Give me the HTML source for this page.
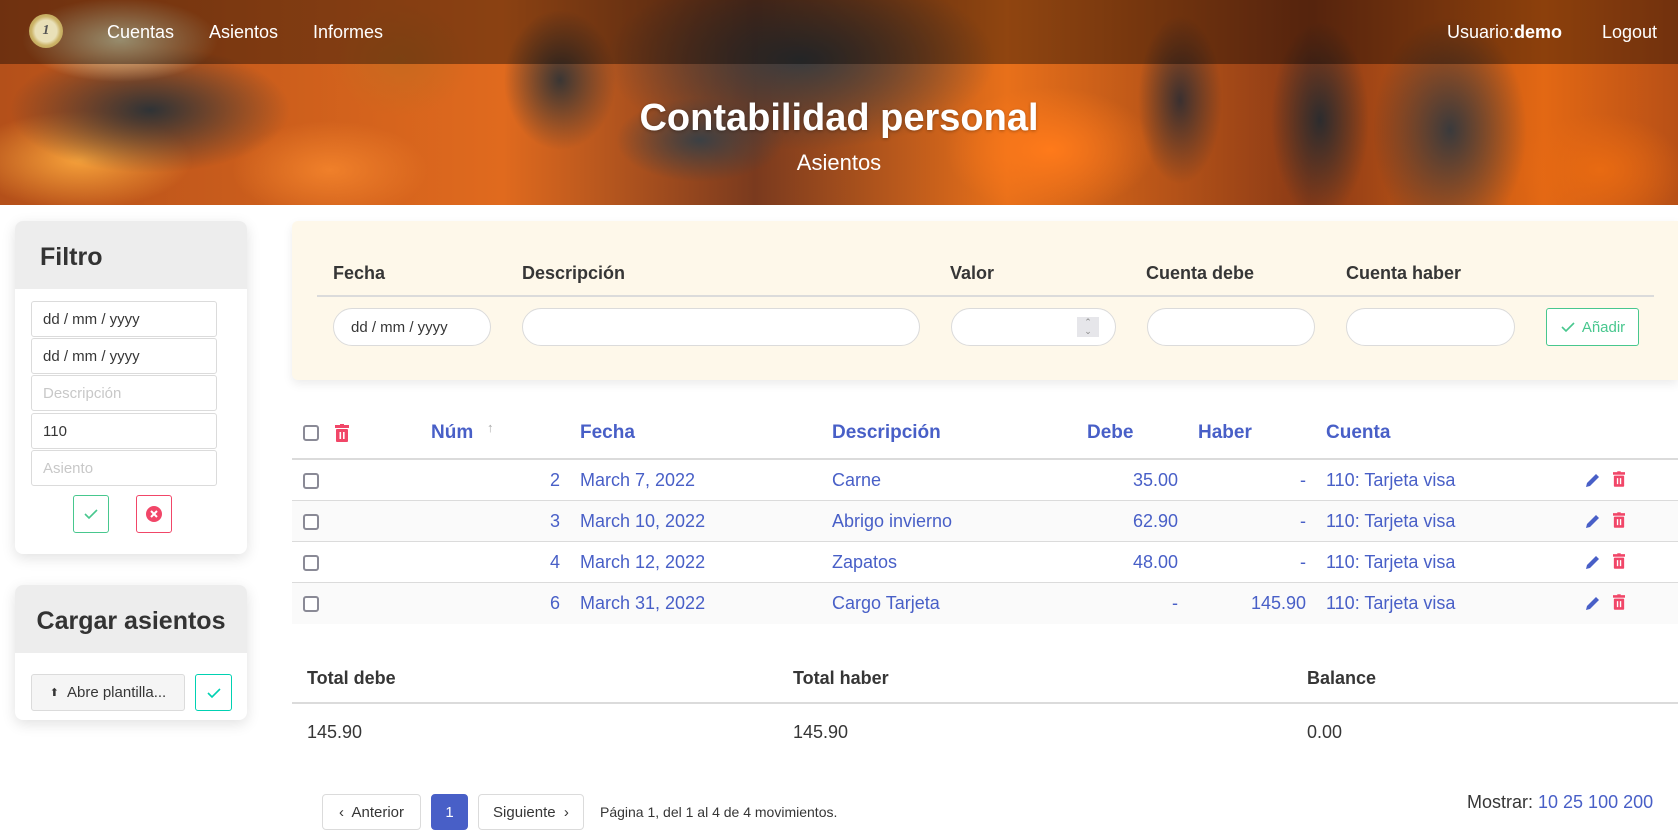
<!DOCTYPE html>
<html><head><meta charset="utf-8">
<style>
*{box-sizing:border-box;margin:0;padding:0}
body{width:1678px;height:835px;overflow:hidden;background:#fff;font-family:"Liberation Sans",sans-serif;color:#363636;position:relative}
.banner{position:absolute;left:0;top:0;width:1678px;height:205px;overflow:hidden;
background:
radial-gradient(ellipse 140px 60px at 120px 40px,#f3e2b0 0%,rgba(240,220,170,0) 70%),
radial-gradient(ellipse 200px 90px at 150px 110px,#2f3336 0%,rgba(40,44,48,0) 70%),
radial-gradient(ellipse 160px 70px at 80px 160px,#f6a13a 0%,rgba(246,150,50,0) 70%),
radial-gradient(ellipse 260px 120px at 800px 60px,#3a3c3e 0%,rgba(50,50,52,0) 75%),
radial-gradient(ellipse 120px 60px at 700px 140px,#3b4044 0%,rgba(50,55,60,0) 70%),
radial-gradient(ellipse 110px 160px at 1450px 130px,#3a3a3c 0%,rgba(50,50,52,0) 70%),
radial-gradient(ellipse 70px 140px at 1320px 120px,#2c2c2e 0%,rgba(40,40,40,0) 70%),
radial-gradient(ellipse 60px 120px at 1180px 100px,#3a3030 0%,rgba(40,40,40,0) 70%),
radial-gradient(ellipse 80px 100px at 560px 80px,#3a3634 0%,rgba(40,40,40,0) 70%),
radial-gradient(ellipse 150px 90px at 1050px 150px,#ff7a1a 0%,rgba(255,120,30,0) 70%),
radial-gradient(ellipse 120px 80px at 1600px 170px,#e86a12 0%,rgba(230,100,20,0) 70%),
radial-gradient(ellipse 100px 80px at 400px 60px,#c9691e 0%,rgba(200,100,30,0) 70%),
radial-gradient(ellipse 140px 70px at 330px 170px,#f0802a 0%,rgba(240,130,40,0) 70%),
linear-gradient(90deg,#b4501a,#e06a1e 30%,#7a3a1e 45%,#e8701a 60%,#8a3a16 78%,#e36814 92%,#b85016);}
.navbar{position:absolute;left:0;top:0;width:1678px;height:64px;background:rgba(0,0,0,.38)}
.nav a{position:absolute;top:22px;color:#fff;font-size:18px;text-decoration:none}
.logo{position:absolute;left:29px;top:14px;width:34px;height:34px;border-radius:50%;background:radial-gradient(circle,#e9e0b8 45%,#cdb56a 60%,#a98f40 100%);font:italic bold 14px "Liberation Serif",serif;color:#555;text-align:center;line-height:34px}
.title{position:absolute;left:0;width:1678px;text-align:center;color:#fff}
.card{position:absolute;background:#fff;border-radius:8px;box-shadow:0 4px 14px rgba(0,0,0,.12);overflow:hidden}
.card .hd{background:#ededed;font-weight:bold;font-size:25px;color:#333;white-space:nowrap}
.finp{position:absolute;left:16px;width:186px;height:36px;border:1px solid #dbdbdb;border-radius:3px;font-size:15px;padding:9px 11px;color:#363636}
.ph{color:#c8c8c8}
.btn{position:absolute;border:1px solid;border-radius:3px;background:#fff;display:flex;align-items:center;justify-content:center}
.form{position:absolute;left:292px;top:221px;width:1386px;height:159px;background:#fef8ea;border-radius:6px 0 0 6px;box-shadow:0 4px 10px rgba(0,0,0,.08)}
.lbl{position:absolute;top:42px;font-weight:bold;font-size:18px;color:#363636}
.inp{position:absolute;top:87px;height:38px;background:#fff;border:1px solid #dbdbdb;border-radius:19px;font-size:15px;padding:10px 17px;color:#363636}
.th{position:absolute;top:422px;font-weight:bold;font-size:19px;color:#485fc7}
.row{position:absolute;left:292px;width:1386px;height:41px;border-bottom:1px solid #dbdbdb;font-size:18px;color:#485fc7}
.row span{position:absolute;top:10px}
.cb{position:absolute;width:16px;height:16px;border:2px solid #8a8a96;border-radius:3px;background:#fff}
.r{text-align:right}
.tl{position:absolute;top:668px;font-weight:bold;font-size:18px;color:#363636}
.tv{position:absolute;top:722px;font-size:18px;color:#363636}
.pg{position:absolute;top:794px;height:36px;border:1px solid #dbdbdb;border-radius:4px;font-size:15px;color:#363636;display:flex;align-items:center;justify-content:center}
</style></head><body>
<div class="banner"></div>
<div class="navbar"></div>
<div class="logo">1</div>
<div class="nav">
<a style="left:107px">Cuentas</a><a style="left:209px">Asientos</a><a style="left:313px">Informes</a>
<a style="left:1447px">Usuario:<b>demo</b></a><a style="left:1602px">Logout</a>
</div>
<div class="title" style="top:97px;font-size:38px;font-weight:bold;text-shadow:0 1px 3px rgba(0,0,0,.3)">Contabilidad personal</div>
<div class="title" style="top:150px;font-size:22px">Asientos</div>

<div class="card" style="left:15px;top:221px;width:232px;height:333px">
<div class="hd" style="height:68px;padding:22px 25px">Filtro</div>
<div class="finp" style="top:80px">dd / mm / yyyy</div>
<div class="finp" style="top:117px">dd / mm / yyyy</div>
<div class="finp ph" style="top:154px">Descripción</div>
<div class="finp" style="top:192px">110</div>
<div class="finp ph" style="top:229px">Asiento</div>
<div class="btn" style="left:58px;top:274px;width:36px;height:38px;border-color:#48c78e"><svg width="16" height="16" viewBox="0 0 16 16"><path d="M2 8l4 4 8-8" fill="none" stroke="#48c78e" stroke-width="1.6"/></svg></div>
<div class="btn" style="left:121px;top:274px;width:36px;height:38px;border-color:#f14668"><svg width="18" height="18" viewBox="0 0 18 18"><circle cx="9" cy="9" r="8" fill="#f14668"/><path d="M6 6l6 6M12 6l-6 6" stroke="#fff" stroke-width="2"/></svg></div>
</div>

<div class="card" style="left:15px;top:585px;width:232px;height:135px">
<div class="hd" style="height:68px;padding:22px 0;text-align:center">Cargar asientos</div>
<div class="btn" style="left:16px;top:89px;width:154px;height:37px;border-color:#dbdbdb;background:#f5f5f5;font-size:15px;color:#363636"><span style="font-size:11px;margin-right:8px">&#11014;</span>Abre plantilla...</div>
<div class="btn" style="left:180px;top:89px;width:37px;height:37px;border-color:#00d1b2"><svg width="16" height="16" viewBox="0 0 16 16"><path d="M2 8l4 4 8-8" fill="none" stroke="#00d1b2" stroke-width="1.6"/></svg></div>
</div>

<div class="form">
<div class="lbl" style="left:41px">Fecha</div>
<div class="lbl" style="left:230px">Descripción</div>
<div class="lbl" style="left:658px">Valor</div>
<div class="lbl" style="left:854px">Cuenta debe</div>
<div class="lbl" style="left:1054px">Cuenta haber</div>
<div style="position:absolute;left:25px;top:74px;width:1337px;height:2px;background:#dbdbdb"></div>
<div class="inp" style="left:41px;width:158px">dd / mm / yyyy</div>
<div class="inp" style="left:230px;width:398px"></div>
<div class="inp" style="left:659px;width:165px"><div style="position:absolute;right:16px;top:8px;width:22px;height:20px;background:#e6e6ea;color:#888;font-size:9px;line-height:9px;text-align:center;padding-top:1px">&#8963;<br>&#8964;</div></div>
<div class="inp" style="left:855px;width:168px"></div>
<div class="inp" style="left:1054px;width:169px"></div>
<div class="btn" style="left:1254px;top:87px;width:93px;height:38px;border-color:#48c78e;color:#48c78e;font-size:15px"><svg width="16" height="16" viewBox="0 0 16 16" style="margin-right:6px"><path d="M2 8l4 4 8-8" fill="none" stroke="#48c78e" stroke-width="1.6"/></svg>Añadir</div>
</div>

<div class="cb" style="left:303px;top:425px"></div>
<svg style="position:absolute;left:335px;top:424px" width="14" height="18" viewBox="0 0 14 18"><rect x="0" y="1" width="14" height="3" fill="#f14668"/><rect x="5" y="0" width="4" height="2" fill="#f14668"/><rect x="1" y="5" width="12" height="13" rx="1" fill="#f14668"/><rect x="4.5" y="8" width="1.6" height="7" fill="#fff"/><rect x="8" y="8" width="1.6" height="7" fill="#fff"/></svg>
<div class="th" style="left:431px">Núm</div><div style="position:absolute;left:487px;top:420px;color:#aaa;font-size:13px">&#8593;</div>
<div class="th" style="left:580px">Fecha</div>
<div class="th" style="left:832px">Descripción</div>
<div class="th" style="left:1087px">Debe</div>
<div class="th" style="left:1198px">Haber</div>
<div class="th" style="left:1326px">Cuenta</div>
<div style="position:absolute;left:292px;top:458px;width:1386px;height:2px;background:#dbdbdb"></div>

<div class="row" style="top:460px;background:#fff">
<div class="cb" style="left:11px;top:13px"></div>
<span class="r" style="left:200px;width:68px">2</span><span style="left:288px">March 7, 2022</span><span style="left:540px">Carne</span>
<span class="r" style="left:700px;width:186px">35.00</span><span class="r" style="left:900px;width:114px">-</span><span style="left:1034px">110: Tarjeta visa</span>
<svg style="position:absolute;left:1293px;top:12px" width="16" height="16" viewBox="0 0 16 16"><path d="M1 15l1-4 9-9 3 3-9 9z" fill="#485fc7"/></svg>
<svg style="position:absolute;left:1321px;top:11px" width="12" height="16" viewBox="0 0 14 18"><rect x="0" y="1" width="14" height="3" fill="#f14668"/><rect x="5" y="0" width="4" height="2" fill="#f14668"/><rect x="1" y="5" width="12" height="13" rx="1" fill="#f14668"/><rect x="4.5" y="8" width="1.6" height="7" fill="#fff"/><rect x="8" y="8" width="1.6" height="7" fill="#fff"/></svg>
</div>
<div class="row" style="top:501px;background:#fafafa">
<div class="cb" style="left:11px;top:13px"></div>
<span class="r" style="left:200px;width:68px">3</span><span style="left:288px">March 10, 2022</span><span style="left:540px">Abrigo invierno</span>
<span class="r" style="left:700px;width:186px">62.90</span><span class="r" style="left:900px;width:114px">-</span><span style="left:1034px">110: Tarjeta visa</span>
<svg style="position:absolute;left:1293px;top:12px" width="16" height="16" viewBox="0 0 16 16"><path d="M1 15l1-4 9-9 3 3-9 9z" fill="#485fc7"/></svg>
<svg style="position:absolute;left:1321px;top:11px" width="12" height="16" viewBox="0 0 14 18"><rect x="0" y="1" width="14" height="3" fill="#f14668"/><rect x="5" y="0" width="4" height="2" fill="#f14668"/><rect x="1" y="5" width="12" height="13" rx="1" fill="#f14668"/><rect x="4.5" y="8" width="1.6" height="7" fill="#fff"/><rect x="8" y="8" width="1.6" height="7" fill="#fff"/></svg>
</div>
<div class="row" style="top:542px;background:#fff">
<div class="cb" style="left:11px;top:13px"></div>
<span class="r" style="left:200px;width:68px">4</span><span style="left:288px">March 12, 2022</span><span style="left:540px">Zapatos</span>
<span class="r" style="left:700px;width:186px">48.00</span><span class="r" style="left:900px;width:114px">-</span><span style="left:1034px">110: Tarjeta visa</span>
<svg style="position:absolute;left:1293px;top:12px" width="16" height="16" viewBox="0 0 16 16"><path d="M1 15l1-4 9-9 3 3-9 9z" fill="#485fc7"/></svg>
<svg style="position:absolute;left:1321px;top:11px" width="12" height="16" viewBox="0 0 14 18"><rect x="0" y="1" width="14" height="3" fill="#f14668"/><rect x="5" y="0" width="4" height="2" fill="#f14668"/><rect x="1" y="5" width="12" height="13" rx="1" fill="#f14668"/><rect x="4.5" y="8" width="1.6" height="7" fill="#fff"/><rect x="8" y="8" width="1.6" height="7" fill="#fff"/></svg>
</div>
<div class="row" style="top:583px;background:#fafafa;border-bottom:none">
<div class="cb" style="left:11px;top:13px"></div>
<span class="r" style="left:200px;width:68px">6</span><span style="left:288px">March 31, 2022</span><span style="left:540px">Cargo Tarjeta</span>
<span class="r" style="left:700px;width:186px">-</span><span class="r" style="left:900px;width:114px">145.90</span><span style="left:1034px">110: Tarjeta visa</span>
<svg style="position:absolute;left:1293px;top:12px" width="16" height="16" viewBox="0 0 16 16"><path d="M1 15l1-4 9-9 3 3-9 9z" fill="#485fc7"/></svg>
<svg style="position:absolute;left:1321px;top:11px" width="12" height="16" viewBox="0 0 14 18"><rect x="0" y="1" width="14" height="3" fill="#f14668"/><rect x="5" y="0" width="4" height="2" fill="#f14668"/><rect x="1" y="5" width="12" height="13" rx="1" fill="#f14668"/><rect x="4.5" y="8" width="1.6" height="7" fill="#fff"/><rect x="8" y="8" width="1.6" height="7" fill="#fff"/></svg>
</div>

<div class="tl" style="left:307px">Total debe</div>
<div class="tl" style="left:793px">Total haber</div>
<div class="tl" style="left:1307px">Balance</div>
<div style="position:absolute;left:292px;top:702px;width:1386px;height:2px;background:#dbdbdb"></div>
<div class="tv" style="left:307px">145.90</div>
<div class="tv" style="left:793px">145.90</div>
<div class="tv" style="left:1307px">0.00</div>

<div class="pg" style="left:322px;width:99px;color:#363636">&#8249;&nbsp; Anterior</div>
<div class="pg" style="left:431px;width:37px;background:#485fc7;border-color:#485fc7;color:#fff">1</div>
<div class="pg" style="left:478px;width:106px">Siguiente &nbsp;&#8250;</div>
<div style="position:absolute;left:600px;top:804px;font-size:14px;color:#363636">Página 1, del 1 al 4 de 4 movimientos.</div>
<div style="position:absolute;left:1467px;top:792px;font-size:18px;color:#363636">Mostrar: <span style="color:#485fc7">10 25 100 200</span></div>
</body></html>
